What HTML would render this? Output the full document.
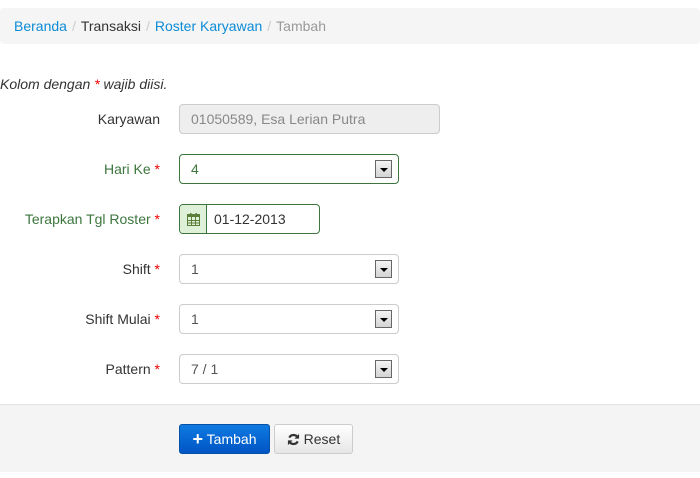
<!DOCTYPE html>
<html><head><style>
*{box-sizing:border-box;margin:0;padding:0}
body{width:700px;height:478px;background:#fff;font-family:"Liberation Sans",Arial,sans-serif;font-size:14px;color:#333;position:relative;overflow:hidden}
.bc{position:absolute;left:0;top:8px;width:700px;height:36px;background:#f5f5f5;border-radius:4px;padding:9px 14px;line-height:18px}
.bc a{color:#0d8bd6;text-decoration:none}
.bc .s{color:#ccc;padding:0 5px}
.note{position:absolute;left:0;top:76px;font-style:italic;font-size:14px}
.r{color:#e00}
.lbl{position:absolute;right:540px;text-align:right;width:200px;line-height:30px;white-space:nowrap}
.g{color:#3c763d}
.in{position:absolute;left:179px;height:30px;border:1px solid #ccc;border-radius:4px;padding:0 11px;line-height:28px;color:#555;background:#fff}
.sel .ar{position:absolute;right:6px;top:5px;width:17px;height:18px;border:1px solid #666;background:linear-gradient(#f4f4f4,#d4d4d4)}
.sel .ar:after{content:"";position:absolute;left:4px;top:7px;border-left:4px solid transparent;border-right:4px solid transparent;border-top:4px solid #000}
.foot{position:absolute;left:0;top:404px;width:700px;height:68px;background:#f4f4f4;border-top:1px solid #e3e3e3}
.btn{position:absolute;top:424px;height:30px;border-radius:3px;line-height:28px;font-size:14px;text-align:center}
</style></head><body>
<div class="bc"><a>Beranda</a><span class="s">/</span>Transaksi<span class="s">/</span><a>Roster Karyawan</a><span class="s">/</span><span style="color:#999">Tambah</span></div>
<div class="note">Kolom dengan <span class="r">*</span> wajib diisi.</div>

<div class="lbl" style="top:104px">Karyawan</div>
<div class="in" style="top:104px;width:261px;background:#eee;color:#888">01050589, Esa Lerian Putra</div>

<div class="lbl g" style="top:154px">Hari Ke <span class="r">*</span></div>
<div class="in sel" style="top:154px;width:220px;border-color:#3c763d;color:#3c763d">4<span class="ar"></span></div>

<div class="lbl g" style="top:204px">Terapkan Tgl Roster <span class="r">*</span></div>
<div class="in" style="top:204px;width:141px;border-color:#3c763d;padding:0;color:#333">
<div style="position:absolute;left:0;top:0;width:27px;height:28px;background:#dff0d8;border-right:1px solid #3c763d;border-radius:3px 0 0 3px">
<svg width="13" height="13" viewBox="0 0 13 13" style="position:absolute;left:7px;top:8px"><rect x="0.5" y="1.5" width="12" height="11" fill="none" stroke="#5a7d3a"/><rect x="0" y="1" width="13" height="3" fill="#5a7d3a"/><path d="M4.5 4v8M8.5 4v8M0 7.5h13M0 10h13" stroke="#5a7d3a"/><rect x="3" y="0" width="1.5" height="3" fill="#5a7d3a"/><rect x="8.5" y="0" width="1.5" height="3" fill="#5a7d3a"/></svg></div>
<span style="position:absolute;left:34px">01-12-2013</span></div>

<div class="lbl" style="top:254px">Shift <span class="r">*</span></div>
<div class="in sel" style="top:254px;width:220px">1<span class="ar"></span></div>

<div class="lbl" style="top:304px">Shift Mulai <span class="r">*</span></div>
<div class="in sel" style="top:304px;width:220px">1<span class="ar"></span></div>

<div class="lbl" style="top:354px">Pattern <span class="r">*</span></div>
<div class="in sel" style="top:354px;width:220px">7 / 1<span class="ar"></span></div>

<div class="foot"></div>
<div class="btn" style="left:179px;width:91px;background:linear-gradient(#0f7ae0,#0055c5);border:1px solid #0650a8;color:#fff"><b style="font-size:18px;vertical-align:-1px">+</b> Tambah</div>
<div class="btn" style="left:274px;width:79px;background:linear-gradient(#fff,#e6e6e6);border:1px solid #ccc;color:#333"><svg width="13" height="13" viewBox="0 0 14 14" style="vertical-align:-2px"><path d="M11.5 5A5 5 0 0 0 2.5 5M2.5 9a5 5 0 0 0 9 0" fill="none" stroke="#333" stroke-width="2.4"/><path d="M13 1v5H8zM1 13V8h5z" fill="#333"/></svg> Reset</div>
</body></html>
